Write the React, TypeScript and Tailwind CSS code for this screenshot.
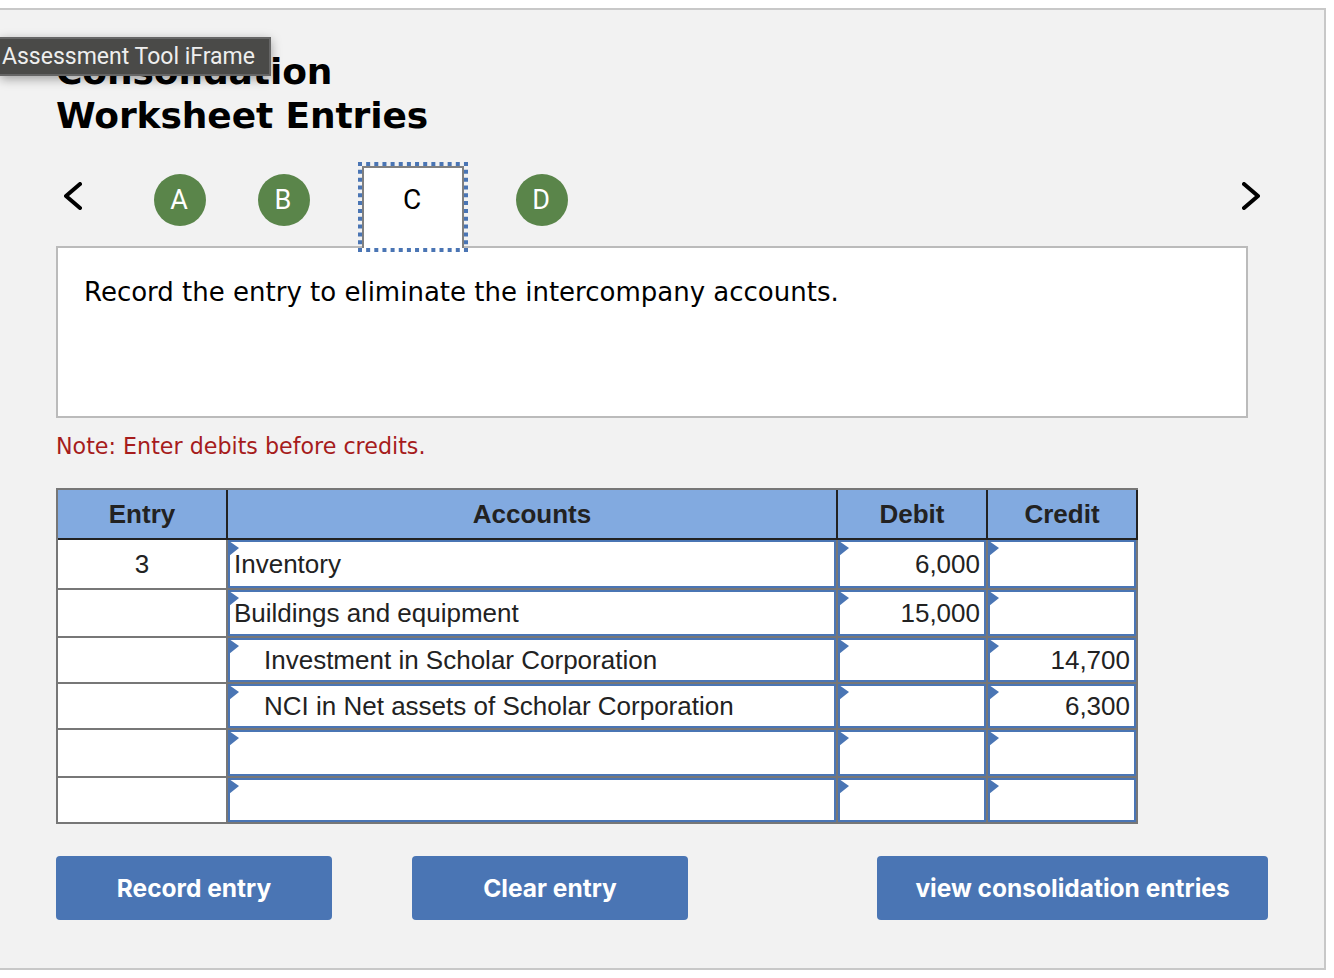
import React from "react";

const BLUE = "#4a75b4";

function Cell({ text = "", align = "left", indent = false, w }: { text?: string; align?: "left" | "right"; indent?: boolean; w: string }) {
  return (
    <div className={`relative shrink-0 h-full border-2 border-[#4a75b4] bg-white flex items-center ${w} ${align === "right" ? "justify-end pr-[4px]" : "justify-start"}`}>
      <svg className="absolute left-[-1px] top-[-1px]" width="10" height="16" viewBox="0 0 10 16">
        <polygon points="0,0 10,7 0,15" fill={BLUE} />
      </svg>
      <span className={`text-[26px] leading-none text-[#222] ${indent ? "pl-[34px]" : "pl-[4px]"}`}>{text}</span>
    </div>
  );
}

const rows = [
  { e: "3", a: "Inventory", d: "6,000", c: "", i: false, h: "h-[50px] border-b-2" },
  { e: "", a: "Buildings and equipment", d: "15,000", c: "", i: false, h: "h-[48px] border-b-2" },
  { e: "", a: "Investment in Scholar Corporation", d: "", c: "14,700", i: true, h: "h-[46px] border-b-2" },
  { e: "", a: "NCI in Net assets of Scholar Corporation", d: "", c: "6,300", i: true, h: "h-[46px] border-b-2" },
  { e: "", a: "", d: "", c: "", i: false, h: "h-[48px] border-b-2" },
  { e: "", a: "", d: "", c: "", i: false, h: "h-[44px]" },
];

export default function App() {
  return (
    <div className="pt-2 bg-white w-[1334px] h-[978px] overflow-hidden relative">
      <div className="w-[1326px] h-[962px] border-t-2 border-r-2 border-b-2 border-[#c8c8c8] bg-[#f2f2f2] pt-[40px] pl-[56px]">
        <h1 className="text-[36px] leading-[44px] font-bold text-black tracking-[-0.1px]" style={{ fontFamily: "'DejaVu Sans', sans-serif" }}>
          Consolidation
          <br />
          Worksheet Entries
        </h1>

        <div className="flex items-start h-[80px] mt-[28px] relative w-[1210px]">
          <svg className="mt-[16px] ml-[8px]" width="18" height="28" viewBox="0 0 18 28">
            <path d="M16 2 L2 14 L16 26" fill="none" stroke="#000" strokeWidth="4" strokeLinecap="round" strokeLinejoin="round" />
          </svg>
          <div className="ml-[72px] mt-[8px] w-[52px] h-[52px] rounded-full bg-[#5a854a] text-white text-[27px] flex items-center justify-center pr-[2px]" style={{ fontFamily: "Roboto, sans-serif" }}>A</div>
          <div className="ml-[52px] mt-[8px] w-[52px] h-[52px] rounded-full bg-[#5a854a] text-white text-[27px] flex items-center justify-center pr-[2px]" style={{ fontFamily: "Roboto, sans-serif" }}>B</div>
          <div className="ml-[52px] w-[102px] h-[82px] border-2 border-b-0 border-[#808080] bg-white relative z-10 text-[28px] text-black flex items-start justify-center pt-[14px] pr-[2px] leading-[36px]" style={{ fontFamily: "Roboto, sans-serif" }}>
            C
            <svg className="absolute left-[-6px] top-[-6px]" width="110" height="90" viewBox="0 0 110 90">
              <g fill="none" stroke={BLUE} strokeWidth="4">
                <line x1="0" y1="2" x2="110" y2="2" strokeDasharray="4 4.15" />
                <line x1="0" y1="88" x2="110" y2="88" strokeDasharray="4 4.15" />
                <line x1="2" y1="0" x2="2" y2="90" strokeDasharray="4 3.82" />
                <line x1="108" y1="0" x2="108" y2="90" strokeDasharray="4 3.82" />
              </g>
            </svg>
          </div>
          <div className="ml-[52px] mt-[8px] w-[52px] h-[52px] rounded-full bg-[#5a854a] text-white text-[27px] flex items-center justify-center pr-[2px]" style={{ fontFamily: "Roboto, sans-serif" }}>D</div>
          <svg className="absolute left-[1186px] top-[16px]" width="18" height="28" viewBox="0 0 18 28">
            <path d="M2 2 L16 14 L2 26" fill="none" stroke="#000" strokeWidth="4" strokeLinecap="round" strokeLinejoin="round" />
          </svg>
        </div>

        <div className="w-[1192px] h-[172px] border-2 border-[#bbb] bg-white pl-[26px] pt-[26px] text-[26px] leading-[36px] text-black" style={{ fontFamily: "'DejaVu Sans', sans-serif" }}>
          Record the entry to eliminate the intercompany accounts.
        </div>

        <p className="mt-[12px] text-[22.2px] leading-[32px] text-[#a61c1c]" style={{ fontFamily: "'DejaVu Sans', sans-serif" }}>
          Note: Enter debits before credits.
        </p>

        <div className="mt-[26px] w-[1082px] border-2 border-[#777] bg-white" style={{ fontFamily: "'Liberation Sans', sans-serif" }}>
          <div className="flex h-[50px] mr-[-2px] bg-[#82aae0] border-b-2 border-r-2 border-[#222] text-[26px] font-bold text-[#222]">
            <div className="w-[168px] flex items-center justify-center">Entry</div>
            <div className="w-[610px] border-l-2 border-[#222] flex items-center justify-center">Accounts</div>
            <div className="w-[150px] border-l-2 border-[#222] flex items-center justify-center">Debit</div>
            <div className="w-[150px] border-l-2 border-[#222] flex items-center justify-center">Credit</div>
          </div>
          {rows.map((r, i) => (
            <div key={i} className={`flex bg-[#777] gap-[2px] border-[#777] ${r.h}`}>
              <div className="w-[168px] shrink-0 bg-white flex items-center justify-center text-[26px] text-[#222]">{r.e}</div>
              <Cell w="w-[608px]" text={r.a} indent={r.i} />
              <Cell w="w-[148px]" text={r.d} align="right" />
              <Cell w="w-[148px]" text={r.c} align="right" />
            </div>
          ))}
        </div>

        <div className="mt-[32px] flex text-white text-[24.5px] font-bold" style={{ fontFamily: "Inter, sans-serif" }}>
          <button className="w-[276px] h-[64px] rounded-[4px] bg-[#4a75b4]">Record entry</button>
          <button className="ml-[80px] w-[276px] h-[64px] rounded-[4px] bg-[#4a75b4]">Clear entry</button>
          <button className="ml-[189px] w-[391px] h-[64px] rounded-[4px] bg-[#4a75b4]">view consolidation entries</button>
        </div>
      </div>

      <div className="absolute left-0 top-[37px] w-[271px] h-[39px] bg-[#4a4a48] border-2 border-l-0 border-[#666] text-[#eee] text-[23px] leading-[35px] pl-[2px] shadow-[0_3px_10px_rgba(0,0,0,0.35)]" style={{ fontFamily: "Roboto, sans-serif" }}>
        Assessment Tool iFrame
      </div>
    </div>
  );
}
